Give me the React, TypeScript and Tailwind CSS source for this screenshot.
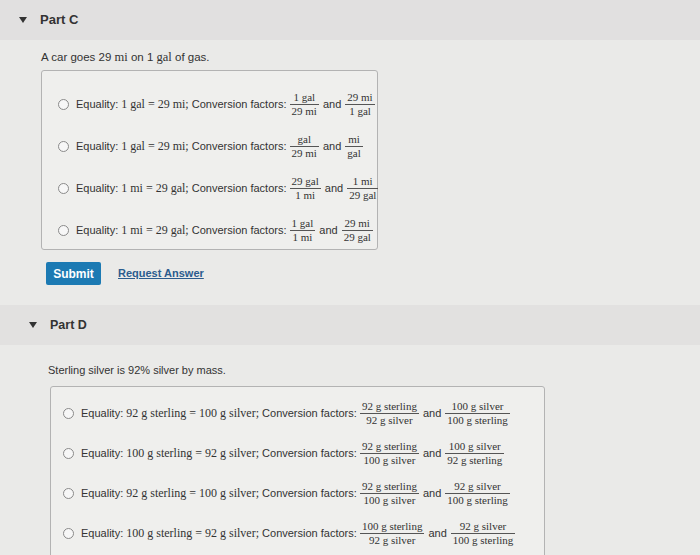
const SANS = 'font-["Liberation_Sans","Helvetica",sans-serif]'
const SERIF = 'font-["Liberation_Serif","Times_New_Roman",serif]'

function Frac({ top, bottom }: { top: string; bottom: string }) {
  return (
    <span className={`inline-flex flex-col items-center align-middle shrink-0 whitespace-nowrap text-[11px] leading-[13px] text-[#333] ${SERIF}`}>
      <span className="px-[2px]">{top}</span>
      <span className="w-full border-t border-[#555]" />
      <span className="px-[2px]">{bottom}</span>
    </span>
  )
}

function Radio() {
  return <span className="inline-block w-[11px] h-[11px] rounded-full border border-[#8a8a8a] bg-[#f7f7f7] shrink-0" />
}

function Triangle() {
  return (
    <svg width="8" height="6" viewBox="0 0 8 6" className="shrink-0">
      <polygon points="0,0 8,0 4,6" fill="#333" />
    </svg>
  )
}

interface Opt {
  eq: string
  f1: [string, string]
  f2: [string, string]
}

const partC: Opt[] = [
  { eq: '1 gal = 29 mi;', f1: ['1 gal', '29 mi'], f2: ['29 mi', '1 gal'] },
  { eq: '1 gal = 29 mi;', f1: ['gal', '29 mi'], f2: ['mi', 'gal'] },
  { eq: '1 mi = 29 gal;', f1: ['29 gal', '1 mi'], f2: ['1 mi', '29 gal'] },
  { eq: '1 mi = 29 gal;', f1: ['1 gal', '1 mi'], f2: ['29 mi', '29 gal'] },
]

const partD: Opt[] = [
  { eq: '92 g sterling = 100 g silver;', f1: ['92 g sterling', '92 g silver'], f2: ['100 g silver', '100 g sterling'] },
  { eq: '100 g sterling = 92 g silver;', f1: ['92 g sterling', '100 g silver'], f2: ['100 g silver', '92 g sterling'] },
  { eq: '92 g sterling = 100 g silver;', f1: ['92 g sterling', '100 g silver'], f2: ['92 g silver', '100 g sterling'] },
  { eq: '100 g sterling = 92 g silver;', f1: ['100 g sterling', '92 g silver'], f2: ['92 g silver', '100 g sterling'] },
]

function OptionRow({ o, h }: { o: Opt; h: string }) {
  return (
    <div className={`flex items-center gap-[7px] ${h}`}>
      <Radio />
      <div className={`flex items-center whitespace-nowrap text-[11px] text-[#333] ${SANS}`}>
        <span>Equality:&nbsp;</span>
        <span className={`text-[12px] ${SERIF}`}>{o.eq}</span>
        <span>&nbsp;Conversion factors:&nbsp;</span>
        <Frac top={o.f1[0]} bottom={o.f1[1]} />
        <span className="px-[4px]">and</span>
        <Frac top={o.f2[0]} bottom={o.f2[1]} />
      </div>
    </div>
  )
}

export default function App() {
  return (
    <div className={`w-[700px] h-[555px] overflow-hidden bg-[#eaeae8] text-[#333] ${SANS}`}>
      {/* Part C */}
      <div className="h-[40px] bg-[#e1e0e0] flex items-center pl-[19px] gap-[13px]">
        <Triangle />
        <span className="text-[13px] font-semibold">Part C</span>
      </div>
      <div className="pl-[41px] pt-[10px]">
        <p className="text-[11.5px] leading-[14px]">
          A car goes 29 <span className={`text-[12.5px] ${SERIF}`}>mi</span> on 1{' '}
          <span className={`text-[12.5px] ${SERIF}`}>gal</span> of gas.
        </p>
        <div className="mt-[6px] w-[337px] h-[180px] border border-[#b3b3b3] rounded-[3px] bg-[#efefed] pl-[16px] pt-[12px]">
          {partC.map((o, i) => (
            <OptionRow key={i} o={o} h="h-[42px]" />
          ))}
        </div>
        <div className="flex items-center gap-[17px] mt-[12px] ml-[5px]">
          <button className="w-[55px] h-[23px] bg-[#1c7ab3] text-white text-[12px] font-bold rounded-[2px]">
            Submit
          </button>
          <span className="text-[11px] font-bold text-[#2b5c8e] underline">Request Answer</span>
        </div>
      </div>

      {/* Part D */}
      <div className="mt-[20px] h-[40px] bg-[#e2e1e0] flex items-center pl-[29px] gap-[13px]">
        <Triangle />
        <span className="text-[12.5px] font-semibold">Part D</span>
      </div>
      <div className="pl-[48px] pt-[18px]">
        <p className="text-[11px] leading-[14px]">Sterling silver is 92% silver by mass.</p>
        <div className="mt-[9px] ml-[2px] w-[495px] h-[200px] border border-[#b3b3b3] rounded-[3px] bg-[#efefed] pl-[12px] pt-[6px]">
          {partD.map((o, i) => (
            <OptionRow key={i} o={o} h="h-[40px]" />
          ))}
        </div>
      </div>
    </div>
  )
}
